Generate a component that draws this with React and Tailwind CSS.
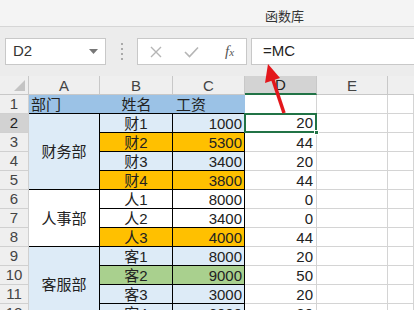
import React from 'react';

const font = { fontFamily: '"Liberation Sans", "Noto Sans CJK SC", sans-serif' };

// gray row header on the left
function RowHead({ n, active }) {
  return (
    <div
      className={`flex items-center justify-center border-r border-b border-[#d0d0d0] text-[15px] ${
        active ? 'bg-[#d2d2d2] text-[#222]' : 'bg-[#efefef] text-[#444]'
      }`}
    >
      {n}
    </div>
  );
}

function Cell({ children, className = '' }) {
  return <div className={`flex items-center text-[15px] text-[#222] leading-none overflow-hidden ${className}`}>{children}</div>;
}

const grid = 'border-r border-b border-[#d4d4d4] bg-white';
const box = 'border-r border-b border-black';

export default function App() {
  return (
    <div className="w-[414px] h-[310px] overflow-hidden relative bg-white" style={font}>
      {/* ribbon strip */}
      <div className="h-[27px] bg-[#f4f4f4] border-b border-[#d6d6d6] flex items-center">
        <span className="ml-[265px] text-[13px] text-[#333] pt-[6px]" style={{ fontFamily: '"Noto Sans CJK SC", sans-serif' }}>函数库</span>
      </div>

      {/* formula bar */}
      <div className="h-[49px] bg-[#ececec] flex items-start pt-[11px]">
        <div className="ml-[5px] w-[101px] h-[27px] bg-white border border-[#c8c8c8] flex items-center justify-between px-[7px]">
          <span className="text-[15px] text-[#333]">D2</span>
          <svg width="9" height="5" viewBox="0 0 9 5"><polygon points="0,0 9,0 4.5,5" fill="#777" /></svg>
        </div>
        <div className="w-[31px] h-[27px] flex flex-col items-center justify-center gap-[3px]">
          <span className="w-[2px] h-[2px] bg-[#aaa]" />
          <span className="w-[2px] h-[2px] bg-[#aaa]" />
          <span className="w-[2px] h-[2px] bg-[#aaa]" />
          <span className="w-[2px] h-[2px] bg-[#aaa]" />
        </div>
        <div className="w-[110px] h-[27px] bg-white border border-[#c8c8c8] flex items-center">
          <svg className="ml-[12px]" width="12" height="12" viewBox="0 0 12 12">
            <path d="M1 1 L11 11 M11 1 L1 11" stroke="#b5b5b5" strokeWidth="1.4" />
          </svg>
          <svg className="ml-[22px]" width="15" height="12" viewBox="0 0 15 12">
            <path d="M1 6 L5.5 10.5 L14 1.5" stroke="#b5b5b5" strokeWidth="1.6" fill="none" />
          </svg>
          <span className="ml-[26px] text-[15px] text-[#555] italic" style={{ fontFamily: '"Liberation Serif", serif' }}>
            f<span className="text-[11px]">x</span>
          </span>
        </div>
        <div className="ml-[4px] flex-1 h-[27px] bg-white border border-[#c8c8c8] border-r-0 flex items-center pl-[11px]">
          <span className="text-[15px] text-[#222]">=MC</span>
        </div>
      </div>

      {/* sheet */}
      <div className="grid grid-cols-[29px_71px_73px_72px_72px_71px_1fr] auto-rows-[19px]">
        {/* column headers */}
        <div className="relative bg-[#efefef] border-r border-b border-[#c8c8c8]">
          <svg className="absolute right-[3px] bottom-[3px]" width="11" height="11" viewBox="0 0 11 11">
            <polygon points="11,0 11,11 0,11" fill="#c4c4c4" />
          </svg>
        </div>
        <Cell className="justify-center bg-[#efefef] border-r border-b border-[#c8c8c8] text-[#444]">A</Cell>
        <Cell className="justify-center bg-[#efefef] border-r border-b border-[#c8c8c8] text-[#444]">B</Cell>
        <Cell className="justify-center bg-[#efefef] border-r border-b border-[#c8c8c8] text-[#444]">C</Cell>
        <Cell className="justify-center bg-[#d3d3d3] border-r border-[#c8c8c8] border-b-2 border-b-[#217346] text-[#222]">D</Cell>
        <Cell className="justify-center bg-[#efefef] border-r border-b border-[#c8c8c8] text-[#444]">E</Cell>
        <Cell className="bg-[#efefef] border-b border-[#c8c8c8]" />

        {/* row 1 */}
        <RowHead n="1" />
        <Cell className="bg-[#9bc2e6] border-b border-black pl-[2px]">部门</Cell>
        <Cell className="bg-[#9bc2e6] border-b border-black justify-center">姓名</Cell>
        <Cell className="bg-[#9bc2e6] border-b border-black pl-[3px]">工资</Cell>
        <Cell className={grid} />
        <Cell className={grid} />
        <Cell className={grid} />

        {/* row 2 */}
        <RowHead n="2" active />
        <Cell className={`${box} row-span-4 bg-[#ddebf7] justify-center`}>财务部</Cell>
        <Cell className={`${box} bg-[#ddebf7] justify-center`}>财1</Cell>
        <Cell className={`${box} bg-[#ddebf7] justify-end pr-[2px]`}>1000</Cell>
        <div className="relative border-r border-b border-[#d4d4d4] bg-white flex items-center justify-end pr-[3px] text-[15px] text-[#222]">
          20
          <div className="absolute -left-[1px] -top-[1px] -right-[1px] -bottom-[1px] border-2 border-[#217346]" />
          <div className="absolute -right-[3px] -bottom-[3px] w-[5px] h-[5px] bg-[#217346] border border-white" />
        </div>
        <Cell className={grid} />
        <Cell className={grid} />

        {/* row 3 */}
        <RowHead n="3" />
        <Cell className={`${box} bg-[#ffc000] justify-center`}>财2</Cell>
        <Cell className={`${box} bg-[#ffc000] justify-end pr-[2px]`}>5300</Cell>
        <Cell className={`${grid} justify-end pr-[3px]`}>44</Cell>
        <Cell className={grid} />
        <Cell className={grid} />

        {/* row 4 */}
        <RowHead n="4" />
        <Cell className={`${box} bg-[#ddebf7] justify-center`}>财3</Cell>
        <Cell className={`${box} bg-[#ddebf7] justify-end pr-[2px]`}>3400</Cell>
        <Cell className={`${grid} justify-end pr-[3px]`}>20</Cell>
        <Cell className={grid} />
        <Cell className={grid} />

        {/* row 5 */}
        <RowHead n="5" />
        <Cell className={`${box} bg-[#ffc000] justify-center`}>财4</Cell>
        <Cell className={`${box} bg-[#ffc000] justify-end pr-[2px]`}>3800</Cell>
        <Cell className={`${grid} justify-end pr-[3px]`}>44</Cell>
        <Cell className={grid} />
        <Cell className={grid} />

        {/* row 6 */}
        <RowHead n="6" />
        <Cell className={`${box} row-span-3 bg-white justify-center`}>人事部</Cell>
        <Cell className={`${box} bg-white justify-center`}>人1</Cell>
        <Cell className={`${box} bg-white justify-end pr-[2px]`}>8000</Cell>
        <Cell className={`${grid} justify-end pr-[3px]`}>0</Cell>
        <Cell className={grid} />
        <Cell className={grid} />

        {/* row 7 */}
        <RowHead n="7" />
        <Cell className={`${box} bg-white justify-center`}>人2</Cell>
        <Cell className={`${box} bg-white justify-end pr-[2px]`}>3400</Cell>
        <Cell className={`${grid} justify-end pr-[3px]`}>0</Cell>
        <Cell className={grid} />
        <Cell className={grid} />

        {/* row 8 */}
        <RowHead n="8" />
        <Cell className={`${box} bg-[#ffc000] justify-center`}>人3</Cell>
        <Cell className={`${box} bg-[#ffc000] justify-end pr-[2px]`}>4000</Cell>
        <Cell className={`${grid} justify-end pr-[3px]`}>44</Cell>
        <Cell className={grid} />
        <Cell className={grid} />

        {/* row 9 */}
        <RowHead n="9" />
        <Cell className={`${box} row-span-4 bg-[#ddebf7] justify-center`}>客服部</Cell>
        <Cell className={`${box} bg-[#ddebf7] justify-center`}>客1</Cell>
        <Cell className={`${box} bg-[#ddebf7] justify-end pr-[2px]`}>8000</Cell>
        <Cell className={`${grid} justify-end pr-[3px]`}>20</Cell>
        <Cell className={grid} />
        <Cell className={grid} />

        {/* row 10 */}
        <RowHead n="10" />
        <Cell className={`${box} bg-[#a9d08e] justify-center`}>客2</Cell>
        <Cell className={`${box} bg-[#a9d08e] justify-end pr-[2px]`}>9000</Cell>
        <Cell className={`${grid} justify-end pr-[3px]`}>50</Cell>
        <Cell className={grid} />
        <Cell className={grid} />

        {/* row 11 */}
        <RowHead n="11" />
        <Cell className={`${box} bg-[#ddebf7] justify-center`}>客3</Cell>
        <Cell className={`${box} bg-[#ddebf7] justify-end pr-[2px]`}>3000</Cell>
        <Cell className={`${grid} justify-end pr-[3px]`}>20</Cell>
        <Cell className={grid} />
        <Cell className={grid} />

        {/* row 12 */}
        <RowHead n="12" />
        <Cell className={`${box} bg-[#ddebf7] justify-center`}>客4</Cell>
        <Cell className={`${box} bg-[#ddebf7] justify-end pr-[2px]`}>6000</Cell>
        <Cell className={`${grid} justify-end pr-[3px]`}>20</Cell>
        <Cell className={grid} />
        <Cell className={grid} />
      </div>

      {/* red annotation arrow */}
      <svg className="absolute left-0 top-0 pointer-events-none" width="414" height="310">
        <line x1="284" y1="113" x2="272" y2="77" stroke="#e3161b" strokeWidth="3.5" />
        <polygon points="268,64 280,78 265,83" fill="#e3161b" />
      </svg>
    </div>
  );
}
